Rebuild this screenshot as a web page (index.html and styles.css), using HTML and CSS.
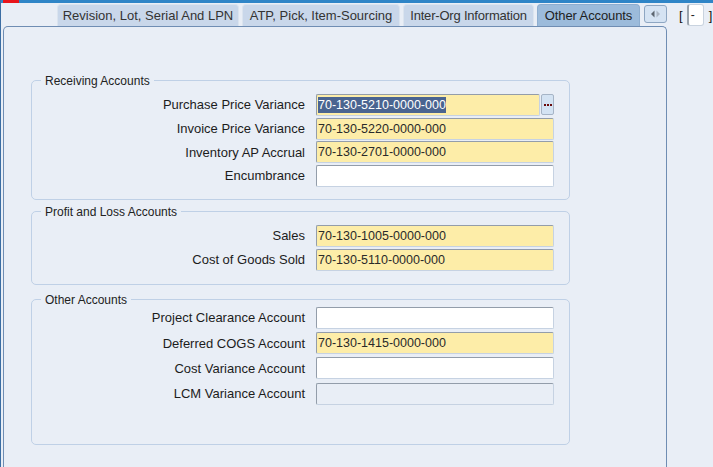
FILE: index.html
```html
<!DOCTYPE html>
<html>
<head>
<meta charset="utf-8">
<link rel="stylesheet" href="styles.css">
</head>
<body>
<div class="screen">
  <div class="topbar"><span class="redmark"></span></div>
  <div class="tabrow">
    <div class="tab tab-rev">Revision, Lot, Serial And LPN</div>
    <div class="tab tab-atp">ATP, Pick, Item-Sourcing</div>
    <div class="tab tab-inter">Inter-Org Information</div>
    <div class="tab tab-active">Other Accounts</div>
    <div class="tabnav">
      <svg width="21" height="16" viewBox="0 0 21 16"><polygon points="9.5,4.5 6,8 9.5,11.5" fill="#5d6670"/><polygon points="11.5,4.5 15,8 11.5,11.5" fill="#aab5c3"/></svg>
    </div>
    <span class="bracket">[</span>
    <div class="pagefield">-</div>
    <span class="bracket bracket-close">]</span>
  </div>
  <div class="panel">
    <fieldset class="group group-receiving">
      <legend>Receiving Accounts</legend>
      <div class="rows">
        <div class="label">Purchase Price Variance</div>
        <div class="fieldwrap">
          <div class="field field-req field-lov"><span class="sel">70-130-5210-0000-000</span></div>
          <div class="lovbtn"><svg width="11" height="19" viewBox="0 0 11 19"><rect x="2" y="9" width="2" height="2" fill="#6a0a0a"/><rect x="5" y="9" width="2" height="2" fill="#6a0a0a"/><rect x="8" y="9" width="2" height="2" fill="#6a0a0a"/></svg></div>
        </div>
        <div class="label">Invoice Price Variance</div>
        <div class="field field-req">70-130-5220-0000-000</div>
        <div class="label">Inventory AP Accrual</div>
        <div class="field field-req">70-130-2701-0000-000</div>
        <div class="label">Encumbrance</div>
        <div class="field"></div>
      </div>
    </fieldset>
    <fieldset class="group group-profit">
      <legend>Profit and Loss Accounts</legend>
      <div class="rows">
        <div class="label">Sales</div>
        <div class="field field-req">70-130-1005-0000-000</div>
        <div class="label">Cost of Goods Sold</div>
        <div class="field field-req">70-130-5110-0000-000</div>
      </div>
    </fieldset>
    <fieldset class="group group-other">
      <legend>Other Accounts</legend>
      <div class="rows">
        <div class="label">Project Clearance Account</div>
        <div class="field"></div>
        <div class="label">Deferred COGS Account</div>
        <div class="field field-req">70-130-1415-0000-000</div>
        <div class="label">Cost Variance Account</div>
        <div class="field"></div>
        <div class="label">LCM Variance Account</div>
        <div class="field field-disabled"></div>
      </div>
    </fieldset>
  </div>
</div>
</body>
</html>
```
FILE: styles.css
```css
html, body {
  margin: 0;
  padding: 0;
  height: 467px;
  overflow: hidden;
  background: #e9eef6;
  font-family: "Liberation Sans", Arial, sans-serif;
  color: #222;
}

.screen {
  display: flex;
  flex-direction: column;
  height: 467px;
  border-left: 1px solid #3b6da3;
}

.topbar {
  display: flex;
  height: 3px;
  background: #2f85c7;
}

.redmark {
  width: 16px;
  margin-left: 2px;
  background: #e8141b;
}

.tabrow {
  display: flex;
  align-items: flex-end;
  height: 23px;
  padding-left: 56px;
}

.tab {
  box-sizing: border-box;
  flex: none;
  height: 22px;
  margin-right: 3px;
  padding: 0;
  font-size: 13px;
  line-height: 22px;
  text-align: center;
  color: #333;
  background: #c9d7ea;
  border: 1px solid #dbe4ef;
  border-bottom: none;
  border-radius: 4px 4px 0 0;
  white-space: nowrap;
  overflow: hidden;
}

.tab-rev { width: 182px; }
.tab-atp { width: 158px; }
.tab-inter { width: 131px; letter-spacing: -0.2px; }

.tab-active {
  width: 103px;
  letter-spacing: -0.1px;
  background: #9cbbdb;
  border-color: #8eaed0;
  color: #1e1e1e;
  margin-right: 4px;
}

.tabnav {
  box-sizing: border-box;
  flex: none;
  align-self: flex-start;
  margin-top: 2px;
  width: 23px;
  height: 18px;
  background: #d5e3f3;
  border: 1px solid #8ea6c2;
  border-radius: 3px;
  display: flex;
  align-items: center;
  justify-content: center;
}

.bracket {
  align-self: flex-start;
  margin-top: 4px;
  margin-left: 12px;
  font-size: 13px;
  line-height: 18px;
  color: #111;
}

.bracket-close {
  margin-left: 5px;
}

.pagefield {
  box-sizing: border-box;
  flex: none;
  align-self: flex-start;
  margin-top: 1px;
  margin-left: 4px;
  width: 17px;
  height: 22px;
  background: #fff;
  border: 1px solid #c9d3df;
  border-left: 2px solid #9aa3ad;
  border-radius: 3px;
  font-size: 12px;
  line-height: 20px;
  padding-left: 2px;
  color: #222;
}

.panel {
  box-sizing: border-box;
  margin-left: 2px;
  width: 664px;
  height: 460px;
  border: 1px solid #6f8db3;
  border-bottom: none;
  border-radius: 5px 5px 0 0;
  padding: 47px 0 0 27px;
}

.group {
  box-sizing: border-box;
  width: 539px;
  margin: 0;
  padding: 0 15px 0 0;
  border: 1px solid #bfd0e6;
  border-radius: 5px;
  min-width: 0;
}

.group legend {
  margin-left: 9px;
  padding: 0 4px;
  font-size: 12px;
  line-height: 14px;
  color: #222;
}

.rows {
  display: grid;
  grid-template-columns: 1fr 238px;
  column-gap: 11px;
  align-items: center;
}

.group-receiving {
  padding-top: 6px;
  padding-bottom: 12px;
}
.group-receiving .rows { row-gap: 1.67px; }

.group-profit {
  margin-top: 5px;
  padding-top: 6px;
  padding-bottom: 13px;
}
.group-profit .rows { row-gap: 2px; }

.group-other {
  margin-top: 8px;
  padding-top: 0;
  padding-bottom: 39px;
}
.group-other .rows { row-gap: 3.33px; }

.label {
  text-align: right;
  font-size: 13px;
  color: #1c1c1c;
  white-space: nowrap;
}

.field {
  box-sizing: border-box;
  height: 22px;
  background: #fff;
  border: 1px solid #c6d2e2;
  border-top-color: #939daa;
  border-left-color: #939daa;
  border-radius: 2px;
  padding-left: 1px;
  font-size: 12.5px;
  line-height: 20px;
  color: #2a2a2a;
  white-space: nowrap;
  overflow: hidden;
}

.field-req {
  background: #fdeda8;
}

.field-disabled {
  background: #e9eef6;
}

.fieldwrap {
  display: flex;
  height: 22px;
}

.field-lov {
  flex: 1;
}

.sel {
  display: inline-block;
  background: #4a6490;
  color: #fff;
  line-height: 16px;
  vertical-align: middle;
  margin-top: -1px;
}

.lovbtn {
  box-sizing: border-box;
  width: 13px;
  height: 21px;
  margin-left: 1px;
  background: #d4e3f3;
  border: 1px solid #a6b4c6;
  border-radius: 2px;
  display: flex;
  align-items: center;
  justify-content: center;
  overflow: hidden;
}
```
